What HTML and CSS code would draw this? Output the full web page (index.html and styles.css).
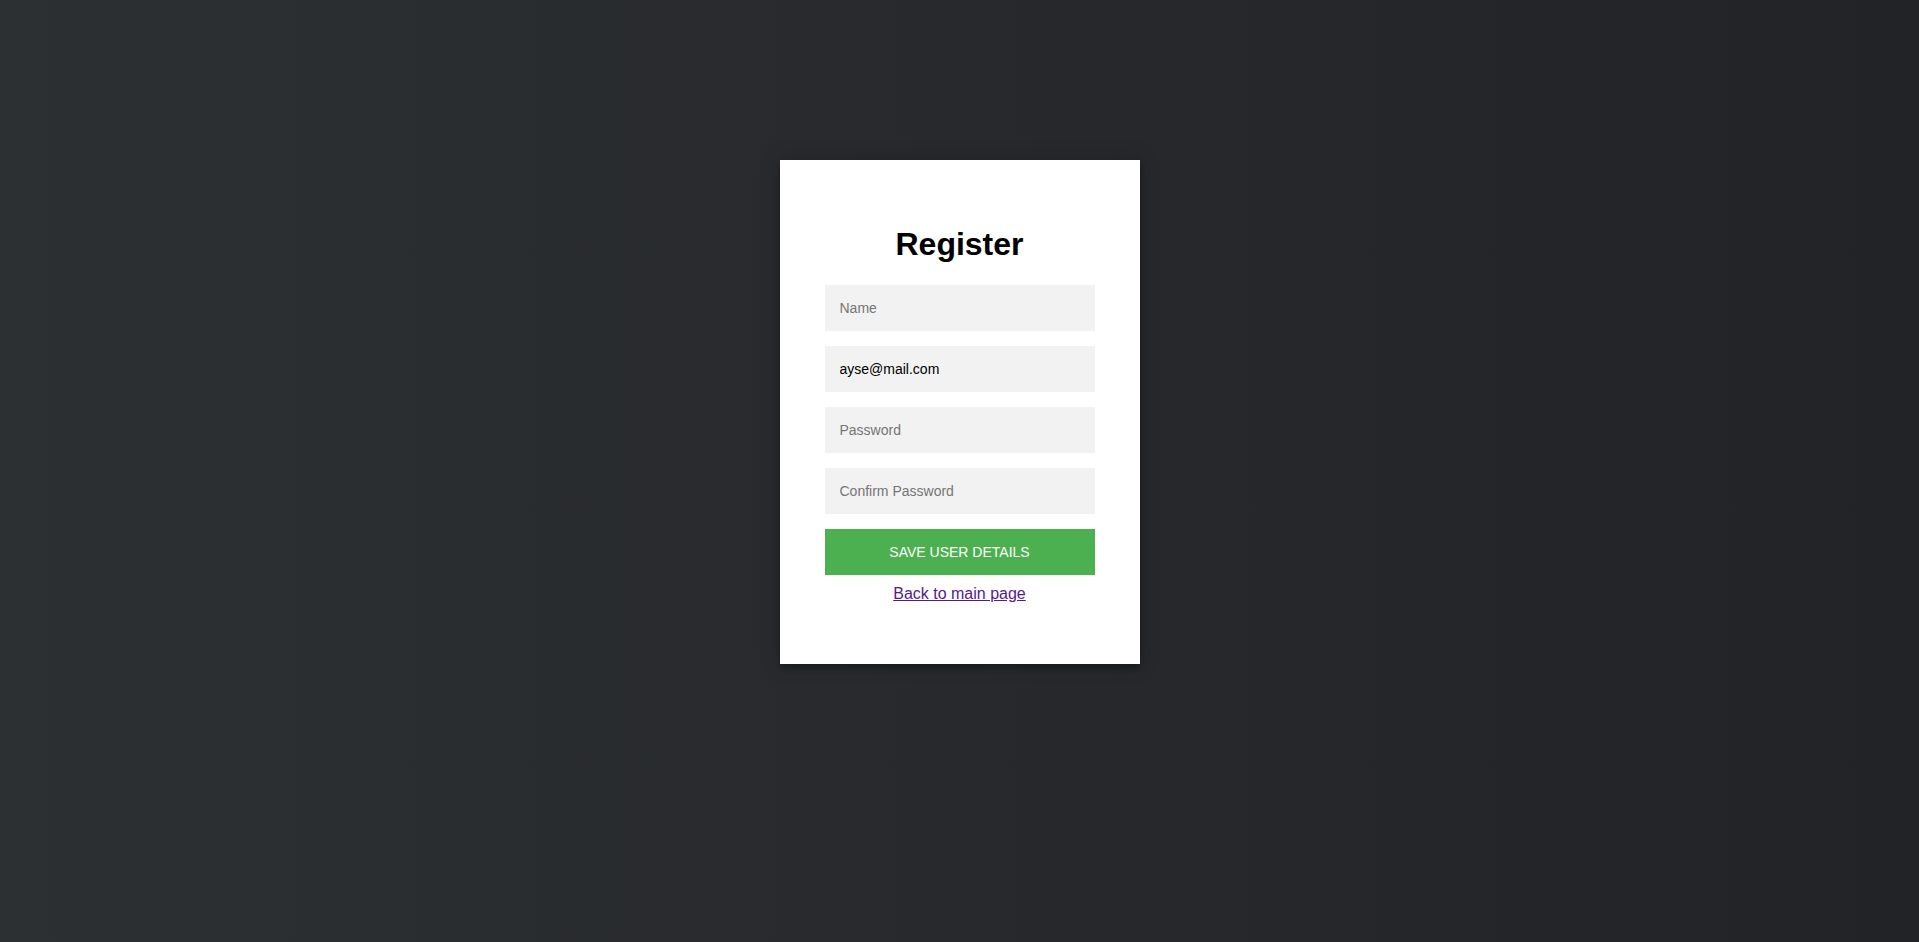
FILE: index.html
```html
<!DOCTYPE html>
<html lang="en">
<head>
<meta charset="utf-8">
<title>Register</title>
<link rel="stylesheet" href="styles.css">
</head>
<body>
<div class="page">
  <form class="form">
    <h1 class="title">Register</h1>
    <input class="field" type="text" placeholder="Name">
    <input class="field" type="email" placeholder="Email" value="ayse@mail.com">
    <input class="field" type="password" placeholder="Password">
    <input class="field" type="password" placeholder="Confirm Password">
    <button class="submit" type="button">Save user details</button>
    <p class="message"><a class="back" href="#">Back to main page</a></p>
  </form>
</div>
</body>
</html>
```

FILE: styles.css
```css
html, body {
  margin: 0;
  padding: 0;
  height: 100%;
}
body {
  background: linear-gradient(to right, #2d3033, #212327);
  font-family: "Liberation Sans", Arial, sans-serif;
}
.page {
  display: flex;
  justify-content: center;
  padding-top: 160px;
}
.form {
  box-sizing: border-box;
  width: 360px;
  padding: 45px;
  background: #ffffff;
  text-align: center;
  box-shadow: 0 0 20px 0 rgba(0, 0, 0, 0.2), 0 5px 5px 0 rgba(0, 0, 0, 0.24);
  display: flex;
  flex-direction: column;
}
.title {
  font-size: 32px;
  font-weight: bold;
  color: #000;
  margin: 21.44px 0;
}
.field {
  box-sizing: border-box;
  width: 100%;
  height: 46px;
  margin: 0 0 15px;
  padding: 15px;
  border: 0;
  outline: 0;
  background: #f2f2f2;
  font-family: "Liberation Sans", Arial, sans-serif;
  font-size: 14px;
  color: #000;
}
.field::placeholder {
  color: #757575;
}
.submit {
  box-sizing: border-box;
  width: 100%;
  height: 46px;
  padding: 15px;
  border: 0;
  outline: 0;
  background: #4caf50;
  color: #ffffff;
  font-family: "Liberation Sans", Arial, sans-serif;
  font-size: 14px;
  text-transform: uppercase;
  cursor: pointer;
}
.message {
  margin: 10px 0 16px;
  font-size: 16px;
}
.back {
  color: #551a8b;
  text-decoration: underline;
}
```
